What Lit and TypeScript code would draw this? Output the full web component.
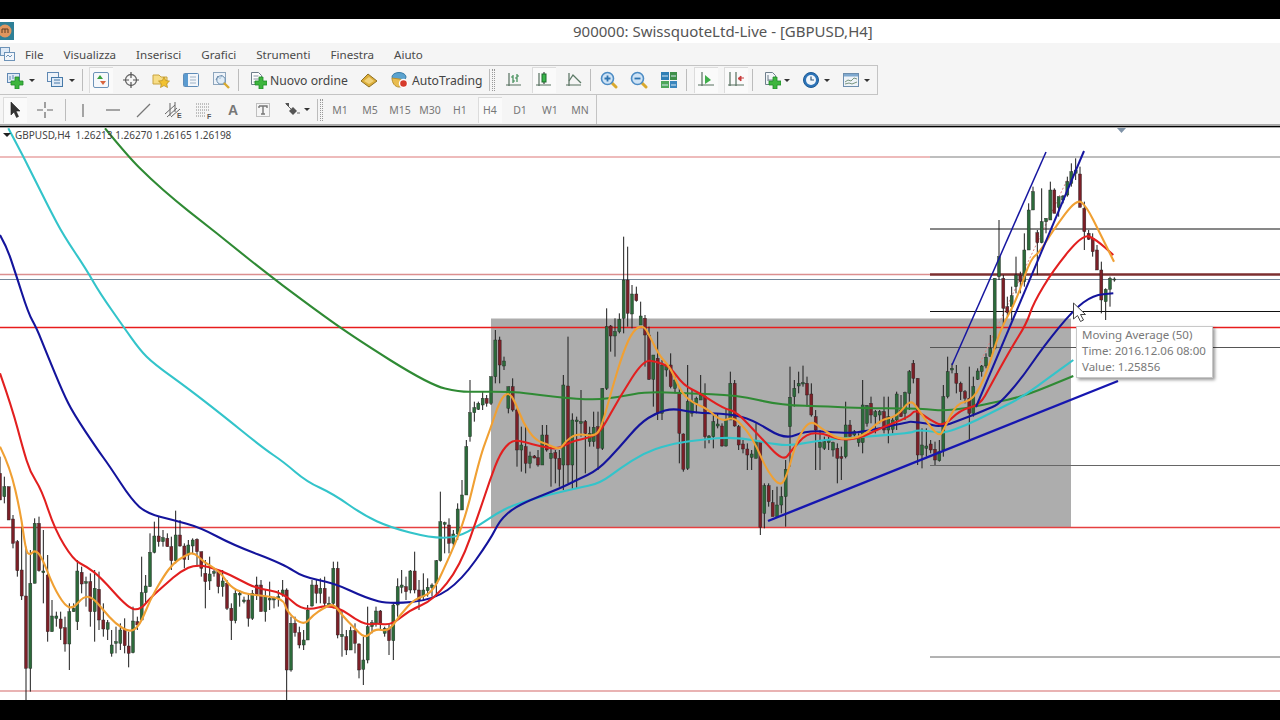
import { LitElement, css, html, svg } from 'lit';
import { customElement } from 'lit/decorators.js';

type Pt = [number, number];
// x, high, body top, body bottom, low, 1 = bearish
type Candle = [number, number, number, number, number, number];

// readings are in 3x crop coordinates, at() brings them back to page pixels
const at = (ox: number, oy: number, pts: Pt[]): Pt[] => pts.map(([x, y]) => [ox + x / 3, oy + y / 3]);

// smooth curve through the midpoints of the readings
const curve = (pts: Pt[]) => {
  let d = `M${pts[0][0].toFixed(1)} ${pts[0][1].toFixed(1)}`;
  for (let i = 1; i < pts.length - 1; i++) {
    const mx = (pts[i][0] + pts[i + 1][0]) / 2;
    const my = (pts[i][1] + pts[i + 1][1]) / 2;
    d += `Q${pts[i][0].toFixed(1)} ${pts[i][1].toFixed(1)} ${mx.toFixed(1)} ${my.toFixed(1)}`;
  }
  const end = pts[pts.length - 1];
  return `${d}L${end[0].toFixed(1)} ${end[1].toFixed(1)}`;
};

const orange: Pt[] = [
  ...at(0, 440, [[0,20],[30,80],[62,220],[78,335],[90,345],[105,330],[125,350],[160,440],[195,498],[220,505],[250,470],[275,470],[310,510],[345,550],[390,578],[420,555],[450,480],[490,410],[520,370],[550,350],[580,335],[610,365],[660,395],[690,440],[730,460],[770,465],[850,475],[860,515],[910,558],[940,525],[970,505],[1000,490],[1030,530],[1060,560],[1095,597],[1125,565],[1165,575],[1200,525],[1245,475],[1295,462],[1340,370],[1395,240]]),
  ...at(480, 220, [[0,710],[30,630],[60,540],[85,515],[105,545],[130,610],[165,660],[200,672],[240,690],[255,665],[290,640],[345,650],[365,620],[395,510],[430,395],[460,330],[490,315],[510,350],[540,410],[570,440],[605,520],[640,550],[680,565],[725,605],[760,590],[800,630],[830,680],[860,750],[900,800],[920,770],[950,660],[990,598],[1030,630],[1080,660],[1150,650],[1200,600],[1250,590],[1290,540]]),
  ...at(900, 370, [[50,110],[90,170],[120,200],[135,170],[170,100],[220,90]]),
  ...at(900, 120, [[260,760],[300,630],[350,540],[390,420],[420,395],[460,330],[530,235],[560,260],[600,340],[642,425]]),
];
const red: Pt[] = [
  ...at(0, 120, [[0,760],[35,860],[70,990]]),
  ...at(0, 440, [[90,95],[125,150],[165,270],[220,360],[260,380],[300,410],[385,505],[420,510],[450,475],[500,430],[540,395],[590,372],[660,390],[720,420],[770,445],[850,458],[910,515],[1000,490],[1090,555],[1130,550],[1175,555],[1230,510],[1300,480],[1380,380]]),
  ...at(480, 220, [[0,870],[30,780],[60,700],[95,660],[130,665],[185,680],[235,688],[270,665],[340,650],[365,630],[420,530],[490,420],[530,425],[570,440],[610,495],[660,520],[730,565],[770,575],[840,650],[910,725],[935,690],[980,640],[1030,640],[1080,660],[1140,655],[1200,625],[1290,590]]),
  ...at(900, 370, [[45,118],[90,150],[130,170],[180,120],[240,105]]),
  ...at(900, 120, [[270,800],[330,690],[380,610],[400,550],[460,450],[550,340],[590,360],[640,405]]),
];
const blue: Pt[] = [
  ...at(0, 120, [[0,345],[20,380],[45,455],[85,580],[110,625],[140,700],[190,820],[220,880],[290,985]]),
  ...at(0, 440, [[330,80],[395,180],[440,220],[520,240],[600,262],[700,315],[850,372],[910,412],[1000,428],[1100,475],[1170,492],[1300,480],[1385,420]]),
  ...at(480, 220, [[30,960],[60,900],[100,865],[150,840],[240,805],[290,780],[355,750],[420,680],[480,610],[530,578],[580,565],[640,578],[750,582],[820,600],[915,660],[980,630],[1100,640],[1150,635],[1290,605]]),
  ...at(900, 370, [[35,155],[80,160],[120,172],[180,150],[270,115]]),
  ...at(900, 120, [[300,850],[365,775],[430,680],[520,570],[580,525],[640,520]]),
];
const cyan: Pt[] = [
  ...at(0, 120, [[25,25],[65,100],[100,170],[150,270],[190,345],[260,450],[300,520],[370,620],[420,690],[460,730],[570,810],[660,880],[790,985]]),
  ...at(0, 440, [[850,65],[920,125],[1000,162],[1090,225],[1170,262],[1290,293],[1370,293]]),
  ...at(480, 220, [[0,915],[50,880],[100,855],[200,825],[290,805],[360,790],[420,745],[490,700],[560,675],[650,660],[770,650],[890,675],[950,675],[1020,660],[1290,640]]),
  ...at(900, 370, [[50,180],[100,185],[130,190],[200,165],[270,130]]),
  ...at(900, 120, [[370,830],[450,770],[520,720]]),
];
const green: Pt[] = [
  ...at(0, 120, [[315,25],[385,110],[450,175],[530,245],[600,300],[700,380],[800,460],[900,535]]),
  [350, 335], [430, 385], [460, 392],
  ...at(480, 220, [[0,515],[80,515],[130,518],[230,532],[350,540],[420,530],[500,515],[620,520],[770,525],[900,555],[1050,560],[1150,565],[1290,565]]),
  ...at(900, 370, [[80,118],[130,122],[200,115],[270,100]]),
  ...at(900, 120, [[370,830],[520,768]]),
];

const crop = (ox: number, oy: number, rows: Candle[]): Candle[] =>
  rows.map(([x, h, t, b, l, c]) => [ox + x / 3, oy + h / 3, oy + t / 3, oy + b / 3, oy + l / 3, c]);

const candles: Candle[] = [
  ...crop(0, 440, [
    [0,50,100,180,180,1],[13,110,140,170,190,0],[26,140,140,240,240,1],[39,225,237,310,325,1],[52,300,305,392,410,1],[65,260,390,468,480,1],[78,320,468,685,780,1],[91,330,430,685,755,0],[104,235,250,430,430,0],[117,230,250,392,395,1],[130,270,393,398,490,0],[143,345,405,575,605,1],[156,480,528,575,575,0],[169,515,528,535,560,0],[182,515,537,565,600,1],[195,530,563,612,635,1],[208,490,515,612,690,0],[221,490,505,515,515,0],[232,360,393,545,570,0],[245,380,397,432,460,1],[258,410,425,430,500,0],[271,400,425,515,560,1],[284,390,445,515,605,0],[297,395,448,540,570,1],[310,490,540,567,590,1],[323,540,548,568,600,0],[335,570,615,640,650,0],[348,560,605,610,640,0],[361,550,570,610,630,0],[374,535,568,617,640,1],[386,575,618,640,682,1],[399,500,543,638,640,0],[412,530,545,555,570,1],[425,350,458,540,540,0],[437,405,438,458,490,0],[450,280,337,440,440,0],[463,245,288,337,340,0],[476,230,288,305,320,1],[489,270,293,305,320,0],[502,280,295,320,320,1],[514,290,320,362,390,1],[527,212,285,362,370,0],[540,240,285,318,320,1],[553,310,318,358,385,1],[565,300,315,345,360,0],[578,295,300,318,340,0],[591,295,298,335,380,1],[604,335,335,385,410,1],[616,360,400,425,505,1],[629,350,402,423,450,0],[642,390,395,400,410,0],[655,390,395,440,460,1],[668,390,423,440,470,0],[681,420,430,505,510,1],[694,490,505,542,600,1],[706,450,460,542,550,0],[719,450,460,465,500,0],[732,470,480,485,490,0],[745,460,480,535,560,1],[757,450,460,535,540,0],[770,410,435,465,480,1],[783,420,435,515,510,1],[796,450,470,515,545,0],[809,425,475,480,510,0],[822,470,475,480,505,0],[835,450,470,475,500,0],[848,420,450,465,470,0],[860,445,450,690,780,1],[873,530,550,690,695,0],[885,530,550,578,590,1],[898,560,578,615,625,1],[911,570,600,615,630,0],[923,495,510,600,600,0],[936,420,435,498,500,0],[949,420,435,460,490,1],[961,415,445,460,490,0],[974,410,445,490,505,1],[987,470,490,495,500,0],[1000,365,385,490,505,0],[1013,365,385,585,595,1],[1026,510,583,590,650,0],[1039,570,590,630,645,1],[1052,560,572,630,630,0],[1065,550,572,610,640,1],[1077,610,612,690,715,1],[1090,590,660,688,735,0],[1103,500,560,660,670,0],[1116,540,548,560,580,0],[1128,500,513,550,560,0],[1141,510,513,550,570,1],[1154,560,565,580,590,0],[1167,550,565,602,645,1],[1180,490,495,602,660,0],[1193,415,440,495,530,0],[1205,390,435,442,460,0],[1218,410,440,455,480,1],[1231,390,393,450,460,0],[1244,335,393,450,460,1],[1257,420,450,480,510,1],[1270,400,450,470,480,0],[1283,415,442,452,470,0],[1296,430,435,443,470,0],[1309,360,362,430,470,0],[1321,155,245,362,365,0],[1334,245,248,253,340,0],[1347,235,255,310,340,1],[1360,270,282,310,320,0],[1373,190,207,282,300,0],[1386,120,165,210,210,0],[1399,0,20,165,165,0],
  ]),
  ...crop(440, 360, [[90,60,158,230,245,0],[103,125,143,158,185,0],[115,125,130,148,150,0]]),
  ...crop(480, 220, [
    [8,515,535,555,570,0],[20,525,535,550,560,1],[33,470,470,550,555,0],[46,330,360,470,490,0],[59,350,360,435,490,1],[72,410,423,438,450,0],[85,500,500,565,580,0],[98,475,500,570,575,1],[111,565,570,690,740,1],[124,620,675,690,755,0],[137,620,680,730,760,1],[150,695,708,730,745,0],[163,705,708,714,715,1],[174,690,713,735,740,1],[187,615,645,735,735,0],[200,615,645,690,695,1],[213,680,700,715,800,0],[226,690,698,715,790,1],[238,690,715,748,800,1],[250,465,495,735,810,0],[264,350,498,735,790,1],[277,580,600,735,810,0],[290,590,600,605,805,0],[303,510,605,610,650,0],[316,600,605,640,760,1],[329,620,640,665,680,0],[341,575,622,665,680,0],[354,575,620,685,750,1],[367,505,505,685,690,0],[380,265,320,505,510,0],[392,315,318,348,395,1],[405,295,335,348,410,0],[418,280,298,335,340,0],[431,50,180,295,340,0],[443,80,180,280,320,1],[456,195,222,282,325,0],[469,200,222,242,245,1],[482,245,288,315,310,0],[495,285,295,345,440,1],[507,320,345,478,480,1],[520,405,405,478,560,0],[533,335,415,580,600,1],[546,420,435,580,600,0],[559,430,435,450,470,0],[572,400,435,500,505,1],[585,470,480,505,520,0],[598,500,520,640,730,1],[610,640,642,748,755,1],[623,435,545,745,750,0],[636,510,545,580,590,0],[649,530,535,550,580,0],[662,465,525,540,540,0],[675,490,530,650,685,1],[687,645,648,655,670,0],[700,580,605,650,685,0],[713,580,612,618,625,0],[726,610,618,678,680,1],[738,565,600,678,680,0],[751,455,490,600,600,0],[764,480,490,618,620,1],[776,615,620,675,690,1],[789,660,672,687,700,1],[802,670,687,705,750,1],[815,690,702,712,750,0],[828,610,665,715,715,0],[841,665,665,922,945,1],[853,790,797,880,925,0],[866,790,797,845,860,1],[878,810,848,890,880,1],[891,800,855,890,890,0],[904,800,830,855,880,0],[917,720,748,830,920,0],[930,440,532,620,740,0],[943,480,505,530,560,0],[956,455,490,498,520,0],[969,437,488,492,500,0],[981,470,490,525,560,1],[994,490,522,585,590,1],[1007,570,590,630,750,1],[1020,630,668,682,750,0],[1033,650,665,685,690,0],[1046,650,662,668,690,0],[1059,665,668,690,710,0],[1072,670,685,715,790,1],[1084,680,710,715,780,1],[1097,545,615,710,715,0],[1110,600,615,650,660,1],[1123,630,635,645,650,0],[1136,640,650,668,680,0],[1148,480,555,668,700,0],[1161,555,557,610,620,0],[1173,530,550,585,610,1],[1186,570,575,590,640,0],[1199,570,575,585,610,0],[1212,530,575,630,640,1],[1225,530,590,630,670,0],[1238,590,600,628,640,0],[1250,515,522,600,630,0],[1263,525,570,590,590,1],
  ]),
  ...crop(900, 370, [
    [15,65,68,130,150,0],[28,0,5,70,120,0],[40,-30,-20,25,40,1],[53,25,25,255,285,1],[66,175,225,255,295,0],[79,175,228,235,260,0],[92,210,222,240,250,1],[105,215,238,270,285,1],[118,210,245,272,275,0],[130,45,80,240,260,0],[143,-40,5,80,85,0],[156,-20,-5,0,10,0],[169,-15,10,40,70,1],[182,35,40,65,90,1],[195,60,65,85,100,1],[208,-10,85,130,210,1],[220,20,50,130,140,0],[233,-5,3,28,30,0],
  ]),
  ...crop(900, 120, [
    [245,735,738,755,770,0],[258,700,712,738,745,0],[271,645,685,710,710,0],[284,475,475,685,690,0],[297,300,410,470,480,0],[310,465,475,565,620,1],[322,530,560,578,590,1],[335,500,527,560,600,0],[348,410,465,500,520,0],[361,455,465,485,520,1],[373,340,390,485,500,0],[386,250,270,390,390,0],[399,200,215,270,270,0],[412,330,338,368,465,1],[425,205,305,368,370,0],[438,295,295,305,340,0],[451,185,210,300,300,0],[463,205,210,280,280,1],[476,230,230,262,290,0],[489,225,228,240,250,0],[502,170,185,225,230,0],[514,130,155,190,200,0],[527,115,150,160,180,0],[540,140,162,262,262,1],[553,245,265,335,390,1],[566,330,340,358,360,1],[578,340,355,395,410,1],[591,375,390,450,450,1],[604,425,450,540,580,1],[617,505,508,545,600,0],[630,470,475,508,560,0],[643,472,477,479,485,0],
  ]),
];

// horizontal levels: y, from, to, colour, thickness
const levels: [number, number, number, string, number][] = [
  [157, 0, 930, '#e8a5a5', 1.5], [157, 930, 1280, '#a8a8a8', 1.5],
  [229, 930, 1280, '#111', 1],
  [274.5, 0, 930, '#dc8f8f', 1.5], [274.5, 930, 1280, '#7d2f30', 2.5],
  [279.5, 0, 1280, '#74879a', 1],
  [311.5, 930, 1280, '#111', 1],
  [327.5, 0, 1280, '#e81c1c', 1.4],
  [347.5, 930, 1280, '#555', 1],
  [465.5, 930, 1280, '#666', 1],
  [527.5, 0, 1280, '#e64040', 1.4],
  [657, 930, 1280, '#666', 1],
  [691, 0, 1280, '#e29a9a', 1.5],
];

const plus = (x: number, y: number) => svg`<path d="M${x - 2} ${y - 6}h4v4h4v4h-4v4h-4v-4h-4v-4h4z" fill="#3db53d" stroke="#1f8a2a" stroke-width=".8"/>`;
const axes = svg`<path d="M4 2v13M1 14h15" stroke="#56705f" stroke-width="1.2" fill="none"/>`;
const lens = svg`<path d="M11 11l5 5" stroke="#d9a92f" stroke-width="3" stroke-linecap="round"/><circle cx="7.5" cy="7.5" r="6" fill="#cfe3f5" stroke="#4d8cc4" stroke-width="1.6"/>`;

const icons = {
  chart: svg`<rect x="1.5" y="2.5" width="12" height="9" fill="#dfeaf6" stroke="#5f88b3"/><path d="M4 5v4M7 4v4" stroke="#5f88b3"/>${plus(11, 12)}`,
  profiles: svg`<rect x="1.5" y="1.5" width="11" height="9" fill="#eef3f9" stroke="#5f88b3"/><rect x="5.5" y="6.5" width="11" height="9" fill="#dfeaf6" stroke="#4679a8"/><path d="M8 9h6M8 12h6" stroke="#4679a8"/>`,
  market: svg`<rect x="1.5" y="1.5" width="15" height="15" rx="1.5" fill="#f6f8fb" stroke="#6d93b8"/><path d="M5 8l3-4 3 4z" fill="#37a13c"/><path d="M8 10h6l-3 4z" fill="#d9653d"/>`,
  crosshair: svg`<circle cx="9" cy="9" r="5.5" fill="none" stroke="#666" stroke-width="1.3"/><path d="M9 1v6M9 11v6M1 9h6M11 9h6" stroke="#555" stroke-width="1.2"/>`,
  favorites: svg`<path d="M1 4h6l2 2h6v7H1z" fill="#f7dd86" stroke="#c9a441"/><path d="M12 6l1.7 3.6 3.8.5-2.8 2.6.8 3.8-3.5-1.9-3.5 1.9.8-3.8-2.8-2.6 3.8-.5z" fill="#f2c230" stroke="#b58c1f" stroke-width=".7"/>`,
  terminal: svg`<rect x="1.5" y="2.5" width="15" height="13" rx="1" fill="#f3f6fa" stroke="#5f8cb8"/><rect x="2" y="3" width="4" height="12" fill="#5b9bd0"/><path d="M8 6h6M8 9h6M8 12h6" stroke="#9fb2c5"/>`,
  tester: svg`<rect x="1.5" y="1.5" width="12" height="12" fill="#eef3f9" stroke="#8ea6bd"/><path d="M4 9l2-4 2 3 2-4" stroke="#5f7fa0" fill="none"/><circle cx="9" cy="9" r="4.2" fill="#dbe9f6" fill-opacity=".7" stroke="#6b8fb0"/><path d="M12 12l5 5" stroke="#d9a92f" stroke-width="2.4"/>`,
  order: svg`<path d="M2.5 1.5h7l3 3v9h-10z" fill="#fdfdfd" stroke="#6f7f8c"/><path d="M4.500 5h5M4.500 8h6M4.500 11h3" stroke="#8a98a5"/>${plus(12, 12)}`,
  gold: svg`<path d="M1 10l7-7 9 7-8 6z" fill="#dcae3a" stroke="#8f7124"/><path d="M4 10l5-4 5 4-5 3z" fill="#f1d27a"/>`,
  auto: svg`<ellipse cx="8" cy="6" rx="7" ry="4.500" fill="#5ba3cf" stroke="#3a7ca6"/><path d="M1 7c0 5 3 9 7 9s6-3 7-7z" fill="#e9bd50" stroke="#b8902f"/><circle cx="12.500" cy="12.500" r="4" fill="#d63a2b" stroke="#fff" stroke-width="1.400"/>`,
  bars: svg`${axes}<path d="M8 4v8M6 6h2M8 10h2M12 3v8M10 7h2M12 5h2" stroke="#3c8a53" stroke-width="1.200" fill="none"/>`,
  candle: svg`${axes}<path d="M9 1v12" stroke="#222"/><rect x="7" y="3" width="4" height="8" fill="#39b54a" stroke="#1c6b2d"/>`,
  curve: svg`${axes}<path d="M4 10l4-6 8 8" stroke="#5c7a66" stroke-width="1.300" fill="none"/>`,
  zoomIn: svg`${lens}<path d="M4.500 7.500h6M7.500 4.500v6" stroke="#2f74b0" stroke-width="1.800"/>`,
  zoomOut: svg`${lens}<path d="M4.500 7.500h6" stroke="#2f74b0" stroke-width="1.800"/>`,
  tile: svg`<rect x="1" y="1" width="8" height="8" fill="#2f7fb5"/><rect x="10" y="1" width="7" height="8" fill="#3e8f4a"/><rect x="1" y="10" width="8" height="7" fill="#4da65a"/><rect x="10" y="10" width="7" height="7" fill="#3a86bd"/><path d="M2 5h6M11 5h5M2 14h6M11 14h5" stroke="#d8e8f2"/>`,
  scroll: svg`<path d="M5 1v14M1 14h16" stroke="#56705f" stroke-width="1.200"/><path d="M8 4l6 5-6 4z" fill="#3fae4a"/>`,
  shift: svg`<path d="M3 1v14M9 1v14M1 14h16" stroke="#56705f" stroke-width="1.200"/><path d="M17 7h-4M14 5l-3 2.500 3 2.500z" fill="#c83c3c" stroke="#c83c3c"/>`,
  addDoc: svg`<path d="M2.500 1.500h7l3 3v9h-10z" fill="#f2f5f8" stroke="#6f7f8c"/><path d="M5 4v6M5 9h5" stroke="#6f7f8c"/>${plus(12, 12)}`,
  clock: svg`<circle cx="9" cy="9" r="7.500" fill="#2d74b8" stroke="#1d5a94"/><circle cx="9" cy="9" r="5" fill="#f1f6fb"/><path d="M9 5.500V9h3" stroke="#33587c" stroke-width="1.200" fill="none"/>`,
  template: svg`<rect x="1.500" y="2.500" width="15" height="13" fill="#eef3f8" stroke="#6d8eae"/><rect x="2" y="3" width="14" height="2.500" fill="#7fa9cf"/><path d="M3 11l3-2 3 1 3-3 3 1M3 13l4-1 3 1 5-2" stroke="#79957f" fill="none"/>`,
  pointer: svg`<path d="M5 1v13l3-3 2.500 5.500 2-1L10 10h4z" fill="#333" stroke="#222" stroke-width=".6"/>`,
  cross: svg`<path d="M9 1v6M9 11v6M1 9h6M11 9h6" stroke="#666" stroke-width="1.200"/>`,
  vline: svg`<path d="M9 3v13" stroke="#777" stroke-width="1.300"/>`,
  hline: svg`<path d="M2 9h14" stroke="#777" stroke-width="1.300"/>`,
  trend: svg`<path d="M3 16L16 3" stroke="#777" stroke-width="1.300"/>`,
  channel: svg`<path d="M1 13l10-9M3 16l10-9M7 16l9-8M6 2v13M11 1v10" stroke="#666" stroke-width="1" fill="none"/><text x="13" y="17" class="mini">E</text>`,
  fibo: svg`<path d="M2 3h13M2 6h13M2 9h13M2 12h10M2 15h10" stroke="#888" stroke-dasharray="1 1"/><text x="13" y="18" class="mini">F</text>`,
  label: svg`<path d="M2.500 2.500h13v13h-13z" fill="none" stroke="#888" stroke-dasharray="1 1"/><path d="M5 5h8v2M9 5v8M7 13h4M5 7V5" stroke="#777" stroke-width="1.400" fill="none"/>`,
  arrows: svg`<path d="M3 3l6 6" stroke="#666"/><path d="M2 2h4v4zM10 6l4 4-4 4-4-4z" fill="#555"/><path d="M14 12h3" stroke="#666"/>`,
};

const ic = (name: keyof typeof icons) => html`<svg class="ic" viewBox="0 0 18 18" width="18" height="18">${icons[name]}</svg>`;

@customElement('app-root')
export class AppRoot extends LitElement {
  static styles = css`
    :host {
      background: #000;
      display: flex;
      flex-direction: column;
      font-family: 'Noto Sans', 'Open Sans', sans-serif;
      height: 720px;
      overflow: hidden;
      width: 1280px;
    }

    .band { background: #000; flex: none; height: 19px; }
    .band.low { height: 20px; }

    .title {
      align-items: center;
      background: #fff;
      color: #555;
      display: flex;
      flex: none;
      font-size: 15px;
      height: 24px;
      padding-left: 573px;
      position: relative;
    }

    .app-icon { left: 0; position: absolute; top: 3px; }

    .menu {
      align-items: center;
      background: #f5f5f5;
      color: #4a4a4a;
      display: flex;
      flex: none;
      font-size: 11.6px;
      gap: 20px;
      height: 22px;
      padding-left: 25px;
      position: relative;
    }

    .menu svg { left: 0; position: absolute; top: 3px; }

    .bars { background: #f5f5f5; flex: none; }

    .tools {
      align-items: center;
      border: solid #c4c4c4;
      border-width: 1px 1px 1px 0;
      box-sizing: border-box;
      display: flex;
      height: 30px;
      width: 878px;
    }

    .tools2 {
      align-items: center;
      border-right: 1px solid #c4c4c4;
      box-sizing: border-box;
      display: flex;
      height: 29px;
      width: 597px;
    }

    .ic { display: block; flex: none; }
    .mini { fill: #555; font: 700 7px 'Liberation Sans', sans-serif; }

    .b {
      align-items: center;
      box-sizing: border-box;
      display: flex;
      flex: none;
      height: 26px;
      justify-content: center;
      width: 30px;
    }

    .b.on { position: relative; }

    .b.on::before {
      background: #fafafa;
      border: solid #dcdcdc;
      border-width: 1px 0 0 1px;
      content: '';
      inset: 0 3px 0 3px;
      position: absolute;
    }

    .b > * { position: relative; }

    .a { color: #777; font: 700 14px 'Liberation Sans', sans-serif; }

    .tf { color: #777; font-size: 10.5px; }

    .wide { align-items: center; color: #444; display: flex; flex: none; font-size: 12.2px; gap: 3px; }

    .sep { background: #bcbcbc; flex: none; height: 22px; width: 1px; }

    .grip {
      border-left: 1px dotted #999;
      border-right: 1px dotted #999;
      flex: none;
      height: 22px;
      margin-left: 2px;
      width: 1px;
    }

    .sp { display: block; flex: none; }

    .drop {
      border-left: 3px solid transparent;
      border-right: 3px solid transparent;
      border-top: 3px solid #333;
      flex: none;
      height: 0;
      width: 0;
    }

    .rule {
      border-bottom: 1px solid #a9a9a9;
      border-top: 2px solid #a9a9a9;
      box-sizing: border-box;
      flex: none;
      height: 4px;
    }

    .chart {
      background: #fff;
      flex: none;
      height: 572px;
      overflow: hidden;
      position: relative;
    }

    .chart > svg { display: block; }

    .label {
      align-items: center;
      color: #444;
      display: flex;
      font-size: 10px;
      gap: 4px;
      left: 3px;
      position: absolute;
      top: 0;
      white-space: pre;
    }

    .label i {
      border-left: 4px solid transparent;
      border-right: 4px solid transparent;
      border-top: 4px solid #222;
    }

    .tip {
      background: #fff;
      border: 1px solid #c8c8c8;
      box-shadow: 2px 2px 3px rgba(0, 0, 0, 0.4);
      box-sizing: border-box;
      color: #787878;
      font-size: 11.5px;
      height: 52px;
      left: 1076px;
      line-height: 16px;
      padding: 0 5px;
      position: absolute;
      top: 198px;
      white-space: nowrap;
      width: 137px;
    }

    .cursor { left: 1072px; position: absolute; top: 174px; }
  `;

  private sp(w: number) {
    return html`<i class="sp" style="width:${w}px"></i>`;
  }

  private b(name: keyof typeof icons, on = false) {
    return html`<div class="b ${on ? 'on' : ''}">${ic(name)}</div>`;
  }

  private tf(t: string, on = false) {
    return html`<div class="b tf ${on ? 'on' : ''}"><span>${t}</span></div>`;
  }

  private combo(name: keyof typeof icons, gap = 5) {
    return html`${ic(name)}${this.sp(gap)}<i class="drop"></i>`;
  }

  private renderChart() {
    const wick = candles.map(([x, h, , , l]) => svg`<line x1=${x} x2=${x} y1=${h} y2=${l} stroke="#1c1c1c"/>`);
    const body = candles.map(([x, , t, b, , c]) =>
      svg`<rect x=${x - 1.5} y=${t} width="3" height=${Math.max(b - t, 1)} fill=${c ? '#7b1f27' : '#2c6a3a'} stroke="#222" stroke-width=".4"/>`);
    const ma = (pts: Pt[], color: string, w = 2.1) =>
      svg`<path d=${curve(pts)} fill="none" stroke=${color} stroke-width=${w} stroke-linejoin="round"/>`;
    return html`
      <svg width="1280" height="572" viewBox="0 128 1280 572">
        <rect x="491" y="318.500" width="580" height="208.500" fill="#adadad"/>
        ${levels.map(([y, a, b, c, w]) => svg`<line x1=${a} x2=${b} y1=${y} y2=${y} stroke=${c} stroke-width=${w}/>`)}
        <path d="M1117 128h9l-4.500 5z" fill="#7f93a8"/>
        <line x1="980" y1="363" x2="1067" y2="180" stroke="#e08080" stroke-dasharray="2 2"/>
        ${wick}${body}
        ${ma(green, '#2f8a34')}
        ${ma(cyan, '#33c4ca')}
        ${ma(blue, '#14149c')}
        ${ma(red, '#e21f1f')}
        ${ma(orange, '#f0a033')}
        <line x1="768" y1="521" x2="1118" y2="381" stroke="#1616b0" stroke-width="2.400"/>
        <line x1="952" y1="365" x2="1046" y2="152" stroke="#1616a0" stroke-width="1.500"/>
        <line x1="976" y1="407" x2="1084" y2="151" stroke="#1616a0" stroke-width="2"/>
      </svg>
      <div class="label"><i></i><span>GBPUSD,H4  1.26213 1.26270 1.26165 1.26198</span></div>
      <div class="tip">Moving Average (50)<br />Time: 2016.12.06 08:00<br />Value: 1.25856</div>
      <svg class="cursor" width="16" height="22" viewBox="0 0 16 22">
        <path d="M1.500 1v16l4-3.500 3 6 3-1.500-3-5.500h5z" fill="#fff" stroke="#444"/>
      </svg>
    `;
  }

  render() {
    return html`
      <div class="band"></div>
      <div class="title">
        <svg class="app-icon" width="14" height="18" viewBox="0 0 14 18">
          <rect width="14" height="18" fill="#2e7f96"/>
          <circle cx="5" cy="9" r="6.500" fill="#e0965f"/>
          <path d="M2 11V7h6v4M5 7v4" stroke="#5b3a22" fill="none"/>
        </svg>
        900000: SwissquoteLtd-Live - [GBPUSD,H4]
      </div>
      <div class="menu">
        <svg width="15" height="16" viewBox="0 0 15 16">
          <rect x=".5" y="1.500" width="9" height="8" fill="#dfeaf6" stroke="#6d93b8"/>
          <rect x="4.500" y="6.500" width="10" height="8" fill="#f3f6fa" stroke="#6d93b8"/>
          <path d="M6 11l2-2 2 2 2-2" stroke="#6d93b8" fill="none"/>
        </svg>
        <span>File</span><span>Visualizza</span><span>Inserisci</span><span>Grafici</span><span>Strumenti</span><span>Finestra</span><span>Aiuto</span>
      </div>
      <div class="bars">
        <div class="tools">
          ${this.sp(6)}${this.combo('chart')}${this.sp(11)}${this.combo('profiles')}
          ${this.sp(7)}<i class="sep"></i>${this.sp(3)}
          ${this.b('market', true)}${this.b('crosshair')}${this.b('favorites')}${this.b('terminal')}${this.b('tester')}
          ${this.sp(2)}<i class="sep"></i>${this.sp(10)}
          <div class="wide">${ic('order')}<span>Nuovo ordine</span></div>
          ${this.sp(6)}${this.b('gold')}${this.sp(7)}
          <div class="wide">${ic('auto')}<span>AutoTrading</span></div>
          ${this.sp(7)}<i class="sep"></i><i class="grip"></i>${this.sp(4)}
          ${this.b('bars')}${this.b('candle', true)}${this.b('curve')}
          ${this.sp(1)}<i class="sep"></i>${this.sp(3)}
          ${this.b('zoomIn')}${this.b('zoomOut')}${this.b('tile')}
          ${this.sp(2)}<i class="sep"></i>${this.sp(4)}
          ${this.b('scroll', true)}${this.b('shift', true)}
          ${this.sp(1)}<i class="sep"></i>${this.sp(10)}
          ${this.combo('addDoc', 3)}${this.sp(12)}${this.combo('clock', 4)}${this.sp(12)}${this.combo('template', 4)}
        </div>
        <div class="tools2">
          ${this.b('pointer', true)}${this.b('cross')}
          ${this.sp(5)}<i class="sep"></i>${this.sp(2)}
          ${this.b('vline')}${this.b('hline')}${this.b('trend')}${this.b('channel')}${this.b('fibo')}
          <div class="b"><span class="a">A</span></div>
          ${this.b('label')}
          ${this.sp(5)}${ic('arrows')}${this.sp(3)}<i class="drop"></i>
          ${this.sp(7)}<i class="sep"></i><i class="grip"></i>${this.sp(2)}
          ${['M1', 'M5', 'M15', 'M30', 'H1'].map(t => this.tf(t))}
          ${this.tf('H4', true)}
          ${['D1', 'W1', 'MN'].map(t => this.tf(t))}
        </div>
      </div>
      <div class="rule"></div>
      <div class="chart">${this.renderChart()}</div>
      <div class="band low"></div>
    `;
  }
}

declare global {
  interface HTMLElementTagNameMap {
    'app-root': AppRoot;
  }
}
